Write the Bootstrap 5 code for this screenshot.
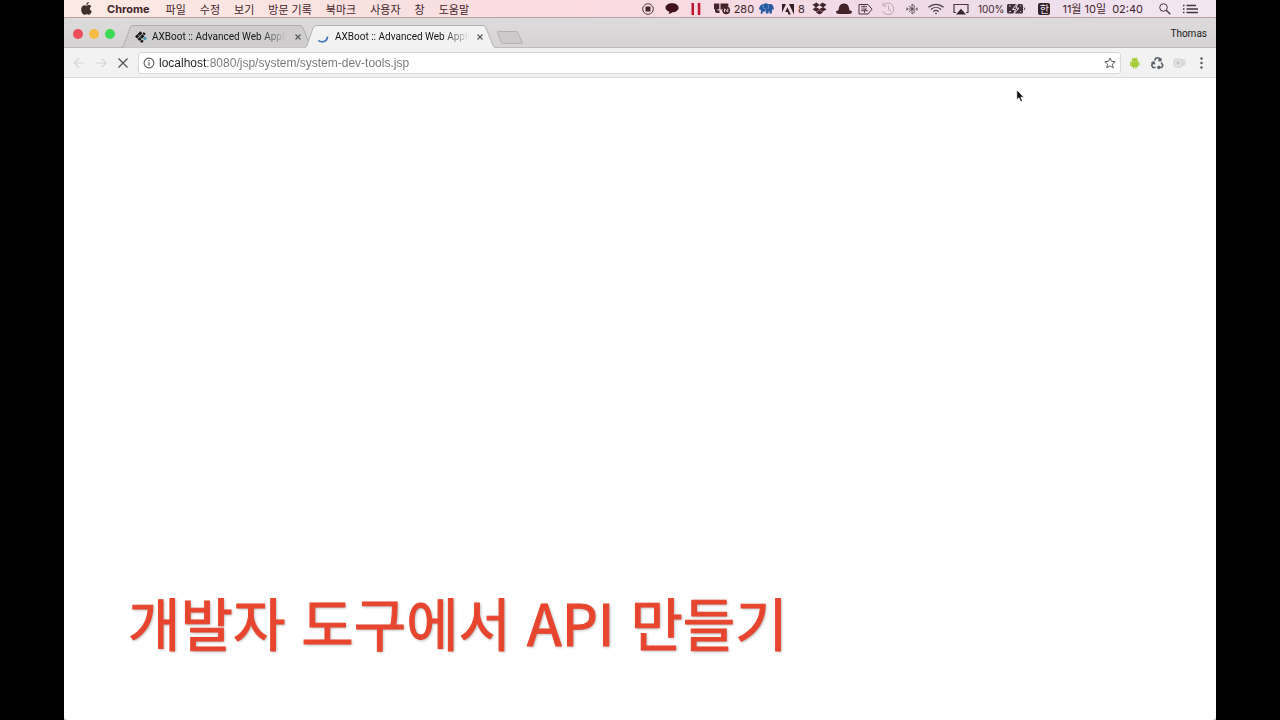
<!DOCTYPE html>
<html lang="ko">
<head>
<meta charset="utf-8">
<meta name="viewport" content="width=device-width, initial-scale=1">
<title>AXBoot :: Advanced Web Application</title>
<link rel="stylesheet" href="https://cdn.jsdelivr.net/npm/bootstrap@5.3.0/dist/css/bootstrap.min.css">
<style>
body{background:#000;font-family:Roboto,"Noto Sans CJK KR",sans-serif;font-size:11px;line-height:18px;color:#222}
button{border:0;padding:0;background:none;color:inherit;line-height:inherit}
svg{display:block;flex:none}
.screen{margin:0 5vw;background:#c9c2c2}
.menubar{height:18px;background:linear-gradient(90deg,#fbeae4 0,#fae1e0 25%,#fadce1 45%,#f6dbe5 60%,#eddbe9 78%,#f3e6f3 100%);color:#43242a;border-bottom:1px solid #b9a0a3;padding:0 18px 0 16px}
.menus{gap:14px;font-family:"Noto Sans CJK KR",sans-serif}
.menus .app{font-family:Inter,sans-serif;font-weight:700;padding-right:2px}
.num{font-family:Inter,"Noto Sans CJK KR",sans-serif}
.charge{font-size:10px}
.ime{width:12px;height:12px;border-radius:2px;background:#33212a;color:#f6e8f3;font:10px/12px "Noto Sans CJK KR",sans-serif;text-align:center;margin-right:4px}
.clock{gap:6px}
.browser{background:#fff;border-radius:4px;overflow:hidden}
.strip{height:30px;background:linear-gradient(#dddbdb,#d5d3d4);padding:7px 9px 0 9px;box-shadow:inset 0 -1px #bdbbbb}
.lights{gap:6px;height:18px;width:48px}
.dot{width:10px;height:10px;border-radius:50%}
.dot-close{background:#ee4e5b}
.dot-min{background:#f6bb44}
.dot-max{background:#3bdb55}
.tab{position:relative;width:192px;height:23px;padding:0 10px 0 14px;font-size:10px;color:#161616;z-index:1}
.tab + .tab{margin-left:-9px;z-index:2}
.tab .shape{position:absolute;inset:0;z-index:-1}
.tabname{width:139px;white-space:nowrap;margin-left:5px;line-height:23px;text-align:left;-webkit-mask-image:linear-gradient(90deg,#000 80%,transparent)}
.profile{font-size:10px;line-height:18px}
.tools{height:30px;background:#f2f2f2;border-bottom:1px solid #dcdcdc;padding:0 7px 0 8px}
.addr{height:22px;background:#fff;border:1px solid #d8d8d8;border-radius:3px;margin:0 6px 0 8px;padding:0 4px}
.url{border:0;outline:0;min-width:0;padding:0;font:12px/20px "Liberation Sans",sans-serif;margin-left:4px;color:transparent;background:linear-gradient(90deg,#222 48px,#757575 48px);-webkit-background-clip:text;background-clip:text}
.page{min-height:calc(100vh - 78px);padding:0 64px 64px}
.headline{font:400 57px/70px "Noto Sans CJK KR",sans-serif;color:#e8452f;-webkit-text-stroke:1px #e8452f;text-shadow:1px 1px 3px rgba(0,0,0,.35);margin:0}
.pointer{position:absolute;left:79.4vw;top:89px}
</style>
</head>
<body>
<div class="screen">
<header class="menubar d-flex align-items-center justify-content-between">
 <nav class="menus d-flex align-items-center" aria-label="메뉴">
  <button aria-label="Apple"><svg width="13" height="16" viewBox="0 0 13 16" fill="#43302d"><path d="M8.8 1c0 1.700-1.200 2.800-2.500 2.900C6.200 2.400 7.400 1.200 8.800 1zM6.500 4.700c.6 0 1.300-.7 2.500-.7 1 0 1.900.5 2.400 1.200-2.100 1.200-1.800 4.200.5 5-.5 1.300-1.700 3.500-2.900 3.500-.9 0-1.300-.5-2.300-.5s-1.400.5-2.200.5C2.900 13.700 1.200 11 1.200 8.400 1.200 5.600 2.900 4.200 4.400 4.200c1 0 1.600.5 2.100.5z"/></svg></button>
  <button class="app">Chrome</button><button>파일</button><button>수정</button><button>보기</button><button>방문 기록</button><button>북마크</button><button>사용자</button><button>창</button><button>도움말</button>
 </nav>
 <div class="d-flex align-items-center">
  <svg width="24" height="18" viewBox="0 0 24 18"><circle cx="11" cy="9" r="5.300" fill="none" stroke="#5a3a42"/><rect x="8.500" y="6.500" width="5" height="5" rx=".6" fill="#43242a"/></svg>
  <svg width="24" height="18" viewBox="1 0 24 18"><path d="M12 3.300c3.800 0 6.600 2 6.600 4.500s-2.800 4.500-6.400 4.500c-1 1.100-2.600 1.600-3.900 1.600.8-.6 1.100-1.400 1-2.200-2.300-.8-3.800-2.200-3.800-3.900 0-2.500 2.800-4.500 6.500-4.500z" fill="#43101c"/></svg>
  <svg width="24" height="18" viewBox="1 0 24 18"><path d="M7.500 3H10v12H7.500zM13.800 3h2.500v12h-2.500z" fill="#c11631"/></svg>
  <svg width="25" height="18" viewBox="0 0 25 18"><path d="M5 3.500h5.300v5.800H8.500v1.200h2V13H8C6.500 13 6 12 6 10.500V9.300H5zM11.500 3.500h7.800v3.500c-3-.8-5.200.6-6 2.400h-1.800z" fill="#43242a"/><circle cx="17.200" cy="10.300" r="3.900" fill="#43242a"/><path d="M15.600 12.200V8.800l3.200 3.200V8.600" fill="none" stroke="#f8dce4" stroke-width=".9"/></svg>
  <span class="num">280</span>
  <svg width="28" height="18" viewBox="1 0 28 18"><path d="M6 9.500C6.200 6 8 4 10.500 4.200 12 2.800 14 3 15.200 4.300 18.500 3 21 5.300 20.800 9.500L20 10l-.9-1-.3 4.600h-2.300l-.3-3.200-1 3.200h-2.300l-.5-4.200-.8 2.300H9.800l-.4 2H7.600L8 10.200 7 9.500z" fill="#275ca3"/><path d="M10.300 5c-1 2.500.5 4 2 3.500M15 5c1 1.800.4 3.200-.3 4" fill="none" stroke="#b6c8e5" stroke-width=".5"/></svg>
  <svg width="16" height="18" viewBox="1 0 16 18"><path d="M0 4h5L0 14.500zM8 4h5v10.500zM6.500 7.300 9.700 14.500H7.600l-1-2.500H4.200z" fill="#302026"/></svg>
  <span class="num">8</span>
  <svg width="31" height="18" viewBox="1 0 31 18"><path d="M8.500 4.800 12.500 2.600 15.500 5l3-2.400 4 2.200-3 2.400 3 2.400-4 2.200-3-2.400-3 2.400-4-2.200 3-2.400zM15.500 5.300l-3.300 1.900 3.300 1.900 3.300-1.900zM12 12.400l3.500-2.300 3.500 2.300-3.500 2.200z" fill="#43242a" fill-rule="evenodd"/></svg>
  <svg width="18" height="18" viewBox="1 0 18 18"><path d="M1 11.800c0-1 1.400-1.300 2.500-1.400C4 6.500 4.800 3.500 9 3.500s5 3 5.500 6.900c1.100.1 2.500.4 2.500 1.400 0 1.800-1.500 2.200-3 2.200H4c-1.500 0-3-.4-3-2.200z" fill="#43242a"/></svg>
  <svg width="24" height="18" viewBox="1 0 24 18"><path d="M6 4.500h9l4 4.700-4 4.800H6z" fill="none" stroke="#4c343b"/><path d="M8 6.700h6M11 5.500v2M8.500 9h5l-2 1.300v2.500M8 10.700h7" fill="none" stroke="#4c343b" stroke-width=".9"/></svg>
  <svg width="23" height="18" viewBox="1 0 23 18" fill="none" stroke="#b8a3ae"><path d="M6.300 5.300A5.800 5.800 0 1 1 5.600 11M6 2.500v3.300h3.500M11.500 5.500v4l2.500 1.500"/></svg>
  <svg width="24" height="18" viewBox="1 0 24 18" fill="none" stroke="#5b434b" stroke-width=".9"><path d="m9 6 6 5.500-3 2.500V4l3 2.500L9 12M6.500 9h1.800M8.500 9h7M16 9h1.500M7 7.500v3M17 7.500v3"/></svg>
  <svg width="24" height="18" viewBox="1 0 24 18" fill="none" stroke="#4c3941" stroke-width="1.200"><path d="M4.500 7.300c4.500-4 10.500-4 15 0M6.900 9.500c3-2.700 7.200-2.700 10.200 0M9.200 11.600c1.700-1.500 3.900-1.500 5.600 0"/><circle cx="12" cy="13.400" r=".8" fill="#4c3941" stroke="none"/></svg>
  <svg width="25" height="18" viewBox="1 0 25 18"><path d="M8 12.500H6v-8h14v8h-2" fill="none" stroke="#4c3941" stroke-width="1.200"/><path d="m13 8.800 5 5.700H8z" fill="#38252c"/></svg>
  <span class="num charge ms-1">100%</span>
  <svg width="34" height="18" viewBox="1 0 34 18"><rect x="4" y="4" width="16" height="9.500" rx="1.500" fill="#43303a"/><path d="M21 7.500q1.500 1.200 0 2.500" fill="none" stroke="#43303a"/><path d="M13.700 4 9.500 9.500h3L10.800 14l5-5.900h-3l1.900-4.100" fill="#43303a" stroke="#f2e1ee" stroke-width="1"/><path d="M6 11.500h2M6 6h2M17 6h1M17 11.500h1" stroke="#d5c3ce"/></svg>
  <span class="ime">한</span>
  <div class="clock num d-flex ms-2"><span>11월 10일</span><span>02:40</span></div>
  <button class="ms-3" aria-label="검색"><svg width="24" height="18" viewBox="0 0 24 18" fill="none" stroke="#43343e"><circle cx="4.500" cy="7.500" r="3.800"/><path d="m7.300 10.300 4 4" stroke-width="1.300"/></svg></button>
  <button aria-label="알림 센터"><svg width="15" height="18" viewBox="0 0 15 18"><path d="M0 5.500h1.500M0 9h1.500M0 12.500h1.500M3.500 5.500H13M3.500 9H15M3.500 12.500H15" stroke="#43343e" stroke-width="1.400"/></svg></button>
 </div>
</header>
<main class="browser">
 <div class="strip d-flex align-items-start">
  <div class="lights d-flex align-items-center"><span class="dot dot-close"></span><span class="dot dot-min"></span><span class="dot dot-max"></span></div>
  <div class="tab d-flex align-items-center">
   <svg class="shape" width="192" height="23" viewBox="0 0 192 23"><path d="M0 22.500c2 0 2.500-1 3-2.500L9 3q1-2.500 3-2.500h167q2 0 3 2.500l7 17q1 2.500 3 2.500" fill="#cfcdcd" stroke="#acaaaa"/></svg>
   <svg width="12" height="12" viewBox="0 0 12 12"><path d="M0 5.500 2.300 3.200l2 2L2 7.500zM2.600 2.900 5.400.2l2 2-2.800 2.700zM7.700 2.200 8.900 1l1.800 2L9 4.500zM4.900 5.700 7.400 3.200l2 2-2.500 2.500zM2.500 8.100l2-2 2 2-2 2zM5 10.400l2-2 1.700 1.700L7 12z" fill="#171717"/><path d="m7.800 7.600 2-2.200L12 7.100l-2 2.300z" fill="#4b94b9"/></svg>
   <button class="tabname">AXBoot :: Advanced Web Appli</button>
   <button class="ms-1" aria-label="탭 닫기"><svg width="12" height="8" viewBox="0 0 12 8"><path d="m4.500 1.500 5 5m0-5-5 5" stroke="#555" stroke-width="1.100"/></svg></button>
  </div>
  <div class="tab d-flex align-items-center">
   <svg class="shape" width="192" height="23" viewBox="0 0 192 23"><path d="M0 23c2-.5 2.500-1 3-2.500L9 3q1-2.500 3-2.500h167q2 0 3 2.500l7 17.500q1 2 3 2.500" fill="#f2f2f2" stroke="#b5b3b3"/><path d="M2 23h188" stroke="#f2f2f2" stroke-width="1.500"/></svg>
   <svg width="12" height="12" viewBox="0 0 12 12"><path d="M.3 9.500C4.500 12.500 9.500 10 9.500 5.500" fill="none" stroke="#4779bd" stroke-width="1.700"/></svg>
   <button class="tabname">AXBoot :: Advanced Web Appli</button>
   <button class="ms-1" aria-label="탭 닫기"><svg width="12" height="8" viewBox="0 0 12 8"><path d="m3.500 1.500 5 5m0-5-5 5" stroke="#555" stroke-width="1.100"/></svg></button>
  </div>
  <button aria-label="새 탭"><svg width="28" height="23" viewBox="0 0 28 23"><path d="M2.500 6.500h17q2 0 2.500 1.500l4 9q.5 1.500-1 1.500H7.500q-2 0-2.500-1.500L1.500 8q-.5-1.500 1-1.500z" fill="#cbc9c9" stroke="#b3b1b1"/></svg></button>
  <button class="profile ms-auto">Thomas</button>
 </div>
 <div class="tools d-flex align-items-center">
  <button aria-label="뒤로"><svg width="22" height="16" viewBox="0 0 22 16" fill="none" stroke="#d4d4d4" stroke-width="1.200"><path d="M12.500 8h-10M7 3.500 2.500 8 7 12.500"/></svg></button>
  <button aria-label="앞으로"><svg width="22" height="16" viewBox="0 0 22 16" fill="none" stroke="#d4d4d4" stroke-width="1.200"><path d="M2 8h10M7.500 3.500 12 8l-4.500 4.500"/></svg></button>
  <button aria-label="중지"><svg width="14" height="16" viewBox="0 0 14 16"><path d="m2.500 3.500 9 9m0-9-9 9" stroke="#555" stroke-width="1.300"/></svg></button>
  <div class="addr d-flex align-items-center flex-grow-1">
   <svg width="12" height="12" viewBox="0 0 12 12"><circle cx="6" cy="6" r="4.900" fill="none" stroke="#5d5d5d" stroke-width="1.100"/><path d="M6 5.200v3.600M6 3v1.200" stroke="#5d5d5d" stroke-width="1.200"/></svg>
   <input class="url flex-grow-1" type="text" aria-label="주소" value="localhost:8080/jsp/system/system-dev-tools.jsp">
   <button aria-label="북마크 추가"><svg width="12" height="12" viewBox="0 0 12 12"><path d="m6 1 1.500 3.300 3.700.4-2.800 2.400.9 3.700L6 8.900l-3.300 1.900.9-3.700L.8 4.700l3.700-.4z" fill="none" stroke="#5d5d5d"/></svg></button>
  </div>
  <button aria-label="Android"><svg width="23" height="16" viewBox="0 0 23 16" fill="#a4cd39"><path d="M4.500 6.300C4.500 2 11 2 11 6.300zM4.500 6.600H11V12H9.500v1.800H8.300V12H7.200v1.800H6V12H4.500zM3 6.800h1.200v4H3zM11.300 6.800h1.200v4h-1.200zM5 2.300l.5-.3.900 1.300-.5.300zM10.500 2.300 10 2l-.9 1.300.5.300z"/></svg></button>
  <button aria-label="확장 프로그램"><svg width="22" height="16" viewBox="0 0 22 16" fill="none" stroke="#59616a" stroke-width="1.600"><path d="M4.500 5.500 6 3h3l1.500 2.500M8.200 5.400l2.500.3.300-2.500M11.200 7.500l1.600 2.700-1.200 2.300H8M9.500 10.700l-1.700 1.800L9.500 14M5.700 12.500H2.900l-1.200-2.300L3.500 7.200M1.300 8l2.400-.9 1 2.300"/></svg></button>
  <button aria-label="캡처"><svg width="23" height="16" viewBox="0 0 23 16"><rect x="5" y="4" width="9" height="7" rx="2" fill="#dedede"/><rect x="2" y="4" width="8" height="8" rx="2" fill="#e3e3e3" stroke="#cecece"/><path d="M4 8h4M6 6v4" stroke="#bebebe"/></svg></button>
  <button aria-label="메뉴"><svg width="14" height="16" viewBox="0 0 14 16" fill="#555"><circle cx="6.500" cy="3.500" r="1.200"/><circle cx="6.500" cy="8" r="1.200"/><circle cx="6.500" cy="12.500" r="1.200"/></svg></button>
 </div>
 <section class="page d-flex align-items-end"><h1 class="headline">개발자 도구에서 API 만들기</h1></section>
</main>
</div>
<svg class="pointer" width="10" height="15" viewBox="0 0 10 15"><path d="M.8.800v10L3 8.800l1.700 4 1.800-.8-1.700-3.800h3z" fill="#111" stroke="#fff" stroke-width=".7"/></svg>
<script src="https://cdn.jsdelivr.net/npm/bootstrap@5.3.0/dist/js/bootstrap.bundle.min.js"></script>
</body>
</html>
